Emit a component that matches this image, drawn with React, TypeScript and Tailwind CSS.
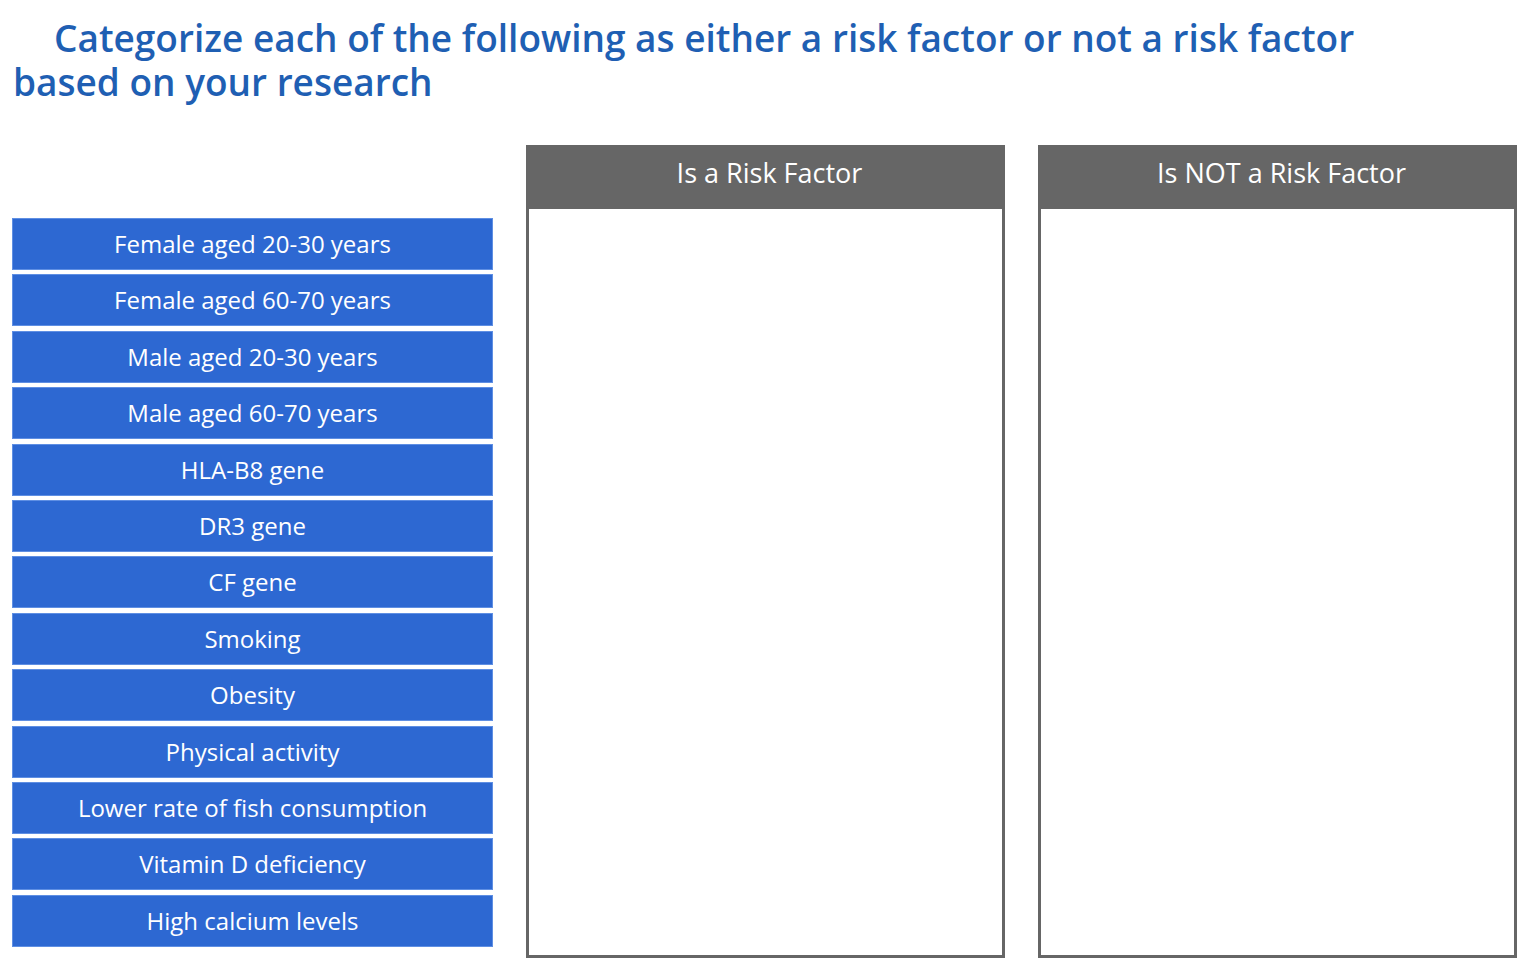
import React from "react";

const items = [
  "Female aged 20-30 years",
  "Female aged 60-70 years",
  "Male aged 20-30 years",
  "Male aged 60-70 years",
  "HLA-B8 gene",
  "DR3 gene",
  "CF gene",
  "Smoking",
  "Obesity",
  "Physical activity",
  "Lower rate of fish consumption",
  "Vitamin D deficiency",
  "High calcium levels",
];

function Column({ title }: { title: string }) {
  return (
    <div className="w-[479px] h-[813px] border-[3px] border-[#666666] bg-white flex flex-col">
      <div className="h-[61px] bg-[#666666] flex items-center justify-center text-white text-[27px] pb-[10px] pl-[8px]">
        {title}
      </div>
      <div className="flex-1" />
    </div>
  );
}

export default function App() {
  return (
    <div
      className="w-[1536px] h-[968px] bg-white overflow-hidden"
      style={{ fontFamily: '"Open Sans", "Noto Sans", sans-serif' }}
    >
      <h1 className="pl-[13px] pt-[16px] w-[1420px] text-[37px] font-semibold leading-[44px] text-[#1f5fb3] indent-[41px]">
        Categorize each of the following as either a risk factor or not a risk factor based on your research
      </h1>
      <div className="flex gap-[33px] pl-[12px] mt-[41px]">
        <div className="w-[481px] pt-[73px] flex flex-col gap-[4.4px]">
          {items.map((t) => (
            <div
              key={t}
              className="h-[52px] bg-[#2d68d2] border border-[#5f8fe3] flex items-center justify-center text-white text-[24px]"
            >
              {t}
            </div>
          ))}
        </div>
        <Column title="Is a Risk Factor" />
        <Column title="Is NOT a Risk Factor" />
      </div>
    </div>
  );
}
